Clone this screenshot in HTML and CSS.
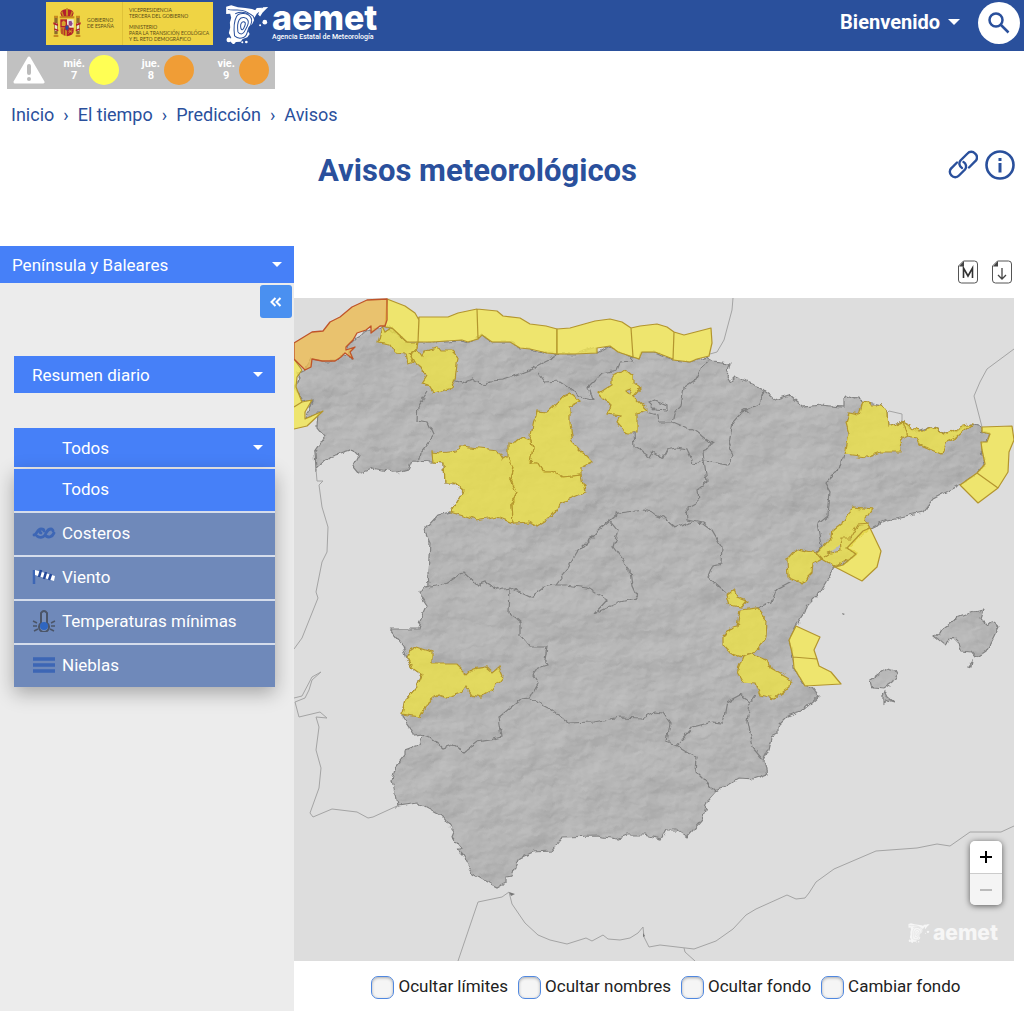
FILE: index.html
```html
<!DOCTYPE html>
<html lang="es">
<head>
<meta charset="utf-8">
<meta name="viewport" content="width=device-width, initial-scale=1">
<title>Avisos meteorológicos - Aemet</title>
<link rel="stylesheet" href="styles.css">
</head>
<body>
<svg class="defs" aria-hidden="true">
  <symbol id="peninsula" viewBox="0 0 130 116">
    <path fill="currentColor" d="M3 5 18 1l20 6 22 2 20 3 16 6-6 8-7 7 3 12-5 11-11 10-2 12 5 8-7 10-14 5-6 8-14 1-7 8-9-9 2-12-7-14 4-16-1-15 4-14-3-12-12 1z"/>
    <g fill="none" stroke="var(--logo-line)" stroke-width="3">
      <path d="M8 13c16 5 36-3 52 6s30 14 28 26"/>
      <path d="M28 92c-2-16-2-44 6-58s34-10 42 2-2 28-6 34-4 22-14 26-22 2-28-4"/>
      <path d="M38 80c-2-14-2-26 4-36s22-8 26 2-4 20-8 28-6 12-12 12-8-2-10-6z"/>
      <path d="M47 70c-2-8 0-16 4-19s10 0 9 6-4 10-6 14-5 4-7-1z"/>
      <path d="M30 26c14-6 30-4 40 2"/>
    </g>
    <path fill="currentColor" d="M94 9l16-1-5 9-11 9-7 12-5-12zM113 7l15-1-9 9-8 8-7 11-6-6 5-12z"/>
    <circle cx="118" cy="51" r="7" fill="currentColor"/><circle cx="11" cy="104" r="7" fill="currentColor"/>
    <circle cx="104" cy="60" r="3" fill="currentColor"/><circle cx="51" cy="111" r="3" fill="currentColor"/><circle cx="63" cy="110" r="4" fill="currentColor"/>
  </symbol>
</svg>

<header class="topbar">
  <div class="brands">
    <a class="gov" href="#">
      <svg class="arms" viewBox="0 0 84 88" aria-hidden="true">
        <path fill="#8d6b2c" d="M4 28h10v50H4zM70 28h10v50H70z"/>
        <path fill="#e9e2cf" d="M6 44h6v24H6zM72 44h6v24h-6z"/>
        <path fill="#b3202c" d="M1 42l14 5v6L1 48zM69 47l14-5v6l-14 5zM4 60l12 4v5L4 65zM68 64l12-4v5l-12 4z"/>
        <path fill="#b3202c" d="M22 14C26 3 36 3 42 3s16 0 20 11l-4 12H26z"/>
        <path fill="#c78a1f" d="M20 24h44v6H20zM39 0h6v22h-6zM28 8l5 15h-4l-5-11zM56 8l-5 15h4l5-11zM2 80h14v6H2zM68 80h14v6H68zM3 22h12v7H3zM69 22h12v7H69z"/>
        <path fill="#b3202c" d="M22 33h20v25H22z"/><path fill="#ece5d6" d="M42 33h20v25H42z"/>
        <path fill="#c98a22" d="M22 58h20v26q-20-3-20-16z"/><path fill="#b3202c" d="M42 58h20v10q0 13-20 16z"/>
        <path stroke="#b3202c" stroke-width="3" d="M27 60v17M34 60v21"/><path fill="#d8a32c" d="M26 40h3v-3h6v3h3v13H26z"/>
        <path fill="#8e4a91" d="M47 39l8-2 4 9-4 8-8-3z"/><path fill="none" stroke="#d8a32c" stroke-width="2" d="M46 62l12 14M58 62 46 76M46 69h12"/>
        <ellipse cx="42" cy="58" rx="6" ry="8" fill="#2c4c98" stroke="#b3202c" stroke-width="2"/>
      </svg>
      <span class="gov-name">GOBIERNO<br>DE ESPAÑA</span>
      <span class="gov-dept"><span>VICEPRESIDENCIA<br>TERCERA DEL GOBIERNO</span><span>MINISTERIO<br>PARA LA TRANSICIÓN ECOLÓGICA<br>Y EL RETO DEMOGRÁFICO</span></span>
    </a>
    <a class="aemet" href="#">
      <svg class="aemet-mark" aria-hidden="true"><use href="#peninsula"/></svg>
      <span class="aemet-text"><span class="aemet-word">aemet</span><span class="aemet-sub">Agencia Estatal de Meteorología</span></span>
    </a>
  </div>
  <div class="top-actions">
    <button class="welcome" type="button">Bienvenido <span class="caret"></span></button>
    <button class="search" type="button" aria-label="Buscar">
      <svg viewBox="0 0 24 24"><circle cx="9" cy="9" r="6.5"/><path d="M13.5 13.5 21.5 21.5"/></svg>
    </button>
  </div>
</header>

<a class="warnings" href="#">
  <svg class="warn-sign" viewBox="0 0 32 28" role="img" aria-label="Avisos"><path fill="#fff" stroke="#fff" stroke-width="3" stroke-linejoin="round" d="M16 2 30 26H2z"/><path stroke="#bbb" stroke-width="4" stroke-linecap="round" d="M16 10v7"/><circle cx="16" cy="23" r="2" fill="#bbb"/></svg>
  <span class="day"><b>mié.<br>7</b><i class="dot yellow"></i></span>
  <span class="day"><b>jue.<br>8</b><i class="dot orange"></i></span>
  <span class="day"><b>vie.<br>9</b><i class="dot orange"></i></span>
</a>

<nav class="crumbs" aria-label="Ruta">
  <a href="#">Inicio</a><span>›</span><a href="#">El tiempo</a><span>›</span><a href="#">Predicción</a><span>›</span><a href="#">Avisos</a>
</nav>

<div class="title-row">
  <h1>Avisos meteorológicos</h1>
  <div class="title-icons">
    <a href="#" aria-label="Enlace"><svg class="icon30" viewBox="0 0 30 30" fill="none" stroke="#2a509c" stroke-width="2.4" stroke-linecap="round"><path d="M9 12.500 3.500 18a5 5 0 0 0 0 7.500 5 5 0 0 0 7.500 0L17 19.500a5 5 0 0 0-1.500-7.500"/><path d="M21 17.500 27 11.500a5 5 0 0 0 0-8 5 5 0 0 0-7.500 0L12.500 10.500a5 5 0 0 0 1.500 7.500"/></svg></a>
    <a href="#" aria-label="Información"><svg class="icon30" viewBox="0 0 30 30"><circle cx="15" cy="15" r="13.500" fill="none" stroke="#2a509c" stroke-width="2.600"/><path fill="#2a509c" d="M13.500 8h3v3h-3zM13.500 13h3v9.500h-3z"/></svg></a>
  </div>
</div>

<div class="layout">
  <aside class="sidebar">
    <div class="picker region">
      <select aria-label="Zona"><option>Península y Baleares</option></select><span class="caret"></span>
    </div>
    <button class="collapse" type="button" aria-label="Ocultar panel"><svg viewBox="0 0 12 10"><path d="M5.500 1 1.500 5l4 4M10.500 1l-4 4 4 4"/></svg></button>
    <div class="filters">
      <div class="picker daily">
        <select aria-label="Periodo"><option>Resumen diario</option></select><span class="caret"></span>
      </div>
      <div class="kinds">
        <button class="kind-toggle" type="button" aria-expanded="true">Todos<span class="caret"></span></button>
        <ul class="kind-list">
          <li><button type="button" class="kind selected"><span class="kind-icon"></span>Todos</button></li>
          <li><button type="button" class="kind"><svg class="kind-icon" viewBox="0 0 24 22" fill="none" stroke="#3d66b5" stroke-width="2.800" stroke-linecap="round"><path d="M2 13c3 0 3-6 7-6 2 0 3 1 3 2M5 14c2 2 6 2 8-1s2-6 6-6c1 0 2 1 2 2M9 11q-1 0-1-1M14 14c3 2 6 1 8-3"/></svg>Costeros</button></li>
          <li><button type="button" class="kind"><svg class="kind-icon" viewBox="0 0 24 22"><path stroke="#3d66b5" stroke-width="2.500" d="M2 4v14"/><path fill="#fff" d="M3 4 23 10l-1 5-19-6z"/><path stroke="#24499b" stroke-width="2.600" d="M9 4 7 11M14 6l-2 7M19 8l-2 6"/></svg>Viento</button></li>
          <li><button type="button" class="kind"><svg class="kind-icon" viewBox="0 0 24 22"><path fill="#7890bc" stroke="#4b5568" stroke-width="2" d="M9 13V3q3-4 6 0v10a5 5 0 1 1-6 0z"/><circle cx="12" cy="16" r="4" fill="#2f66c0"/><path stroke="#4b5568" stroke-width="1.500" d="M1 11l4 2M1 16h4M2 21l4-2M23 11l-4 2M23 16h-4M22 21l-4-2"/></svg>Temperaturas mínimas</button></li>
          <li><button type="button" class="kind"><svg class="kind-icon" viewBox="0 0 24 22" stroke="#3d66b5" stroke-width="3.500"><path d="M1 5h22M1 11h22M1 17h22"/></svg>Nieblas</button></li>
        </ul>
      </div>
    </div>
  </aside>

  <main class="content">
    <div class="tools">
      <a href="#" aria-label="Mapa"><svg class="tool" viewBox="0 0 20 24"><path fill="#fff" stroke="#555" d="M5.500 1h11q3 0 3 3v16q0 3-3 3h-13q-3 0-3-3V6z"/><path fill="#444" d="M1 6.500 6 1v5.500z"/><path fill="none" stroke="#333" stroke-width="1.600" d="M5.500 18V8l4.500 8 4.500-8v10"/></svg></a>
      <a href="#" aria-label="Descargar"><svg class="tool" viewBox="0 0 20 24"><path fill="#fff" stroke="#555" d="M5.500 1h11q3 0 3 3v16q0 3-3 3h-13q-3 0-3-3V6z"/><path fill="#444" d="M1 6.500 6 1v5.500z"/><path fill="none" stroke="#444" stroke-width="1.300" d="M10 8v11M6 15l4 4 4-4"/></svg></a>
    </div>
    <div class="map">
      <svg class="map-canvas" viewBox="294 298 720 663" role="img" aria-label="Mapa de avisos">
        <defs>
          <filter id="relief" x="0" y="0" width="100%" height="100%" color-interpolation-filters="sRGB">
            <feTurbulence type="fractalNoise" baseFrequency=".02 .03" numOctaves="4" seed="8"/>
            <feDiffuseLighting surfaceScale="5" diffuseConstant="1.010" lighting-color="#fff"><feDistantLight azimuth="225" elevation="45"/></feDiffuseLighting>
            <feComponentTransfer result="hills"><feFuncR type="linear" slope=".17" intercept=".59"/><feFuncG type="linear" slope=".17" intercept=".59"/><feFuncB type="linear" slope=".17" intercept=".59"/></feComponentTransfer>
            <feComposite in="hills" in2="SourceAlpha" operator="in"/>
          </filter>
          <filter id="rough" x="-2%" y="-2%" width="104%" height="104%" color-interpolation-filters="sRGB">
            <feTurbulence type="fractalNoise" baseFrequency=".13" numOctaves="2" seed="3" result="n"/>
            <feDisplacementMap in="SourceGraphic" in2="n" scale="6" xChannelSelector="R" yChannelSelector="G"/>
          </filter>
          <path id="land" d="M305 370 312 359 322 361 335 361 343 355 352 358 347 347 357 337 370 330 385 326 390 330 407 342 432 342 462 340 468 342 482 335 492 342 510 342 520 348 530 349 547 353 575 354 597 347 597 353 610 346 618 352 633 357 639 359 642 352 655 352 673 360 690 362 708 356 712 361 730 363 727 377 730 382 735 377 747 382 760 387 770 394 777 400 790 396 803 407 820 405 843 407 843 398 846 395 863 401 881 405 887 413 888 427 903 422 917 432 932 427 948 434 970 424 981 427 982 432 990 434 987 442 981 442 982 450 985 464 977 473 960 485 933 499 923 512 887 520 870 528 847 548 856 554 843 565 835 567 820 592 808 604 805 613 796 626 789 640 793 657 794 668 805 686 813 688 819 696 802 711 787 716 778 725 778 734 772 737 769 750 764 760 767 774 754 779 739 778 724 787 716 792 707 802 702 820 687 837 677 830 666 830 661 839 645 835 627 835 617 839 597 836 563 837 552 851 533 852 520 858 512 876 506 877 506 882 497 887 485 881 473 874 462 854 458 850 463 850 452 837 454 832 442 816 418 803 397 806 395 793 392 780 396 766 405 755 405 750 418 745 422 734 415 735 402 716 405 700 417 687 422 675 412 668 407 658 403 645 390 629 418 629 421 618 427 605 419 593 423 587 429 585 428 573 430 543 424 530 438 515 450 512 463 491 453 483 445 483 444 463 433 462 412 461 408 470 397 473 372 468 358 473 353 467 359 455 353 449 330 456 316 469 315 452 325 437 317 427 318 413 305 419 312 400 303 402 295 387 300 378 297 372ZM934 636 957 617 973 611 983 609 980 618 987 625 992 621 999 626 992 640 986 651 976 658 971 652 962 651 958 642 953 637 945 645ZM871 680 878 675 887 669 895 671 897 675 892 682 883 688 873 687ZM885 691 888 697 894 702 887 700 883 703 883 696ZM972 662 971 668 968 667Z"/>
        </defs>
        <rect x="294" y="298" width="720" height="663" fill="#ddd"/>
        <g fill="none" stroke="#a4a4a4" stroke-width="1">
          <path d="M316 469 317 481 323 481 319 485 322 507 328 527 327 552 322 562 316 592 318 598 302 638 294 649M294 698 302 696 312 677 321 672 312 680 309 690 305 698 295 702 299 717 320 712 327 718 316 717 319 727 316 750 321 768 319 788 310 813 313 817 332 809 357 812 368 818 373 817 397 806"/>
          <path d="M733 298 732 310 724 340 717 352 710 354M1014 349 987 369 980 382 974 396 982 427M887 413 889 411 902 414 902 422"/>
          <path d="M458 961 478 902 502 897 509 892 512 904 525 923 538 935 550 940 567 944 586 938 592 941 603 935 608 939 620 940 630 938 638 933 643 927 644 937 649 947 660 945 694 949 716 941 733 929 746 915 756 909 787 895 796 899 805 898 809 893 816 882 834 869 876 851 917 848 937 844 950 846 970 832 1001 832 1014 826M684 948 685 952 695 961"/>
        </g>
        <path fill="#777" d="M509 892l6 2-4 2zM643 933l2 3-2 1zM842 613l3 1-2 1z"/>
        <g filter="url(#rough)">
          <use href="#land" fill="#b5b5b5" filter="url(#relief)"/>
          <use href="#land" fill="none" stroke="#828282" stroke-width="1.200"/>
          <g fill="none" stroke="#7f7f7f" stroke-width="1.200">
            <path d="M428 392 418 407 417 420 428 422 434 435 425 447 420 453 418 462M453 380 463 383 472 379 485 387 490 381 503 380 530 370 545 362 555 357 556 352M538 372 545 382 560 381 573 390 580 397 593 400 590 390 587 388 602 373 617 370 620 363 632 362 633 357M648 403 655 400 667 405 667 411 655 410Z"/>
            <path d="M647 412 657 415 658 422 673 422 697 432 713 445 703 450 704 461 693 463 687 450 677 448 667 450 663 458 653 452 650 457 635 447 634 433M673 422 675 413 680 407 683 388 695 380 702 367 710 361M765 388 760 403 743 412 733 423 729 443 734 455 728 465 710 462 704 461 707 482 697 490 698 502 687 508 688 520 703 523 712 530 722 547 721 563 713 565 708 577 727 593"/>
            <path d="M692 522 675 528 663 517 645 510 618 513 610 520 598 530 592 537 577 552 567 570 555 585 543 587 530 597 511 588 497 590 485 582 477 585 463 572 443 585 429 587M610 520 618 530 613 547 630 570 632 587 637 598 620 602 595 613 607 600 588 588 565 585 555 585M510 588 509 613 520 622 520 635 530 647 547 647 545 660 548 665 538 668 533 675 538 683 530 697 522 698 498 718 501 737 490 740 478 742 465 752 452 745 443 748 430 737 422 734"/>
            <path d="M530 699 552 710 568 723 593 722 620 717 642 718 655 712 663 713 670 723 667 742 677 746 697 758 696 772 716 792M677 746 693 727 712 722 723 723 727 702 740 695 750 702 747 722 752 747 763 760M750 702 755 695M757 608 771 602 775 590 790 582M844 455 840 468 825 483 830 492 828 515 818 523 822 545 817 553M740 412l5-3 3 2z"/>
          </g>
          <g fill="#f0e442" fill-opacity=".75" stroke="#b3952e" stroke-width="1.200">
            <path d="M382 326 385 332 391 328 407 342 418 342 417 349 410 353 415 362 408 364 406 354 395 353 390 345 378 343ZM409 353 417 349 422 356 425 350 437 347 440 351 452 351 458 357 455 380 450 389 433 393 428 385 422 383 427 375 420 368 413 362Z"/>
            <path d="M432 452 440 453 457 451 460 446 480 448 497 450 503 460 508 457 513 467 510 478 517 493 512 503 513 523 497 517 477 521 470 518 450 512 463 491 453 483 445 483 444 463 433 462Z"/>
            <path d="M530 440 536 411 547 412 557 403 563 396 570 393 580 402 570 407 570 423 573 443 583 453 592 462 582 467 582 475 563 477 550 472 543 472 537 463 530 463 533 448Z"/>
            <path d="M508 442 515 443 523 437 530 440 533 448 530 463 537 463 543 472 550 472 563 477 582 475 586 492 560 503 558 509 548 520 538 526 530 522 513 523 512 503 517 493 510 478 513 467 508 457Z"/>
            <path fill-rule="evenodd" d="M612 375 627 370 633 375 633 382 641 388 633 397 647 410 637 413 637 433 627 433 617 422 620 416 607 414 610 405 598 393 612 384ZM626 391 632 389 630 395Z"/>
            <path d="M863 401 869 402 870 405 881 405 887 413 888 427 903 422 908 436 900 440 901 452 880 452 867 457 845 454 849 434 846 423 849 413 859 415ZM903 422 913 427 920 432 932 427 947 434 962 426 972 424 957 437 945 443 941 454 920 445 917 438 908 436Z"/>
            <path d="M833 529 845 520 853 507 872 509 865 520 870 528 847 548 856 554 835 567 823 560 817 553 832 537ZM824 557 830 553 842 551 841 538 850 538 858 524 869 523M787 559 796 549 817 553 822 558 813 563 812 573 802 583 788 577Z"/>
            <path d="M727 595 734 590 737 597 747 601 742 607 730 605ZM740 610 757 608 767 620 766 637 758 647 752 654 742 657 730 653 723 645 723 637 732 628 737 627ZM752 654 767 660 770 668 791 680 790 687 775 698 770 697 760 695 755 683 743 682 737 672 743 657Z"/>
            <path d="M417 647 432 652 432 664 456 664 467 675 473 669 487 667 493 672 499 667 503 676 492 690 481 697 472 695 466 687 463 692 447 697 438 694 428 702 420 717 402 714 405 700 417 687 422 675 412 668 407 658 410 651Z"/>
          </g>
        </g>
        <g fill="#f2e752" fill-opacity=".8" stroke="#b3952e" stroke-width="1.200" stroke-linejoin="round">
          <path d="M387 299 405 306 415 313 419 320 418 342 407 342 392 328 385 327ZM419 317 448 317 458 313 477 309 478 339 468 342 462 340 432 342 418 342ZM477 309 497 311 503 316 520 318 530 324 546 326 557 329 557 354 547 353 530 349 520 348 510 342 492 342 482 335 478 339Z"/>
          <path d="M557 329 570 328 595 321 610 319 622 322 631 328 633 357 618 352 610 346 597 348 597 353 575 354 557 354ZM631 328 640 326 657 324 667 327 674 332 673 359 655 352 642 352 639 359 633 357ZM674 332 684 335 711 328 712 343 709 356 697 359 690 362 673 360Z"/>
          <path d="M294 359 302 370 297 377 296 387 302 402 312 400 305 412 305 419 323 411 307 426 294 429M294 407 302 402"/>
          <path d="M982 427 1012 426 1014 440 1009 452 1008 472 998 488 977 473 985 464 982 450 981 442 987 442 990 434 982 432ZM977 473 998 488 978 503 960 485ZM870 528 881 551 877 567 862 581 835 567 843 565 856 554 847 548 863 531ZM796 626 820 637 814 650 817 659 793 657 789 640ZM817 659 819 666 831 672 841 684 805 686 794 668 793 657Z"/>
        </g>
        <path fill="#ecbb52" fill-opacity=".8" stroke="#bf5429" stroke-width="1.300" stroke-linejoin="round" d="M294 343 312 332 323 331 330 322 340 317 352 307 367 300 387 299 387 320 385 326 380 326 371 333 371 326 366 330 357 333 353 340 346 347 346 350 355 347 350 352 353 359 345 353 341 357 335 361 322 361 312 359 311 367 305 370 294 359Z"/>
      </svg>
      <div class="zoom">
        <button type="button" aria-label="Acercar"><svg viewBox="0 0 12 12"><path d="M6 0v12M0 6h12"/></svg></button>
        <button type="button" aria-label="Alejar" disabled><svg viewBox="0 0 12 12"><path d="M0 6h12"/></svg></button>
      </div>
      <div class="watermark"><svg aria-hidden="true"><use href="#peninsula"/></svg><span>aemet</span></div>
    </div>
    <form class="options">
      <label><input type="checkbox">Ocultar límites</label>
      <label><input type="checkbox">Ocultar nombres</label>
      <label><input type="checkbox">Ocultar fondo</label>
      <label><input type="checkbox">Cambiar fondo</label>
    </form>
  </main>
</div>
</body>
</html>
```

FILE: styles.css
```css
* { box-sizing: border-box; }
body { margin: 0; background: #fff; color: #222; font: 17px/24px Roboto, "Liberation Sans", sans-serif; }
a { color: #2a509c; text-decoration: none; }
button, select { font: inherit; color: inherit; border: 0; border-radius: 0; }
h1 { margin: 0; }
.defs { position: absolute; width: 0; height: 0; }
.caret { width: 0; height: 0; border: 5px solid transparent; border-top-color: #fff; border-bottom: 0; }

.topbar { display: flex; justify-content: space-between; background: #2a509c; color: #fff; height: 51px; padding: 2px 4px 0 46px; }
.brands { display: flex; gap: 12px; align-items: flex-start; }
.gov { display: flex; align-items: stretch; width: 167px; height: 43px; background: #efd444; color: #5b4c16; font: 5px/6px Lato, sans-serif; }
.arms { width: 28px; height: 30px; margin: 6px 6px 0 7px; }
.gov-name { width: 36px; padding-top: 15px; border-right: 1px solid #dfc238; }
.gov-dept { display: flex; flex-direction: column; gap: 5px; padding: 5px 0 0 6px; white-space: nowrap; }
.aemet { display: flex; gap: 3px; color: #fff; --logo-line: #2a509c; padding-top: 3px; }
.aemet-mark { width: 44px; height: 39px; }
.aemet-text { display: flex; flex-direction: column; }
.aemet-word { font: 800 34px/26px Inter, sans-serif; }
.aemet-sub { font: 500 7px/10px Roboto, sans-serif; padding-top: 1px; }
.top-actions { display: flex; gap: 18px; }
.welcome { display: flex; align-items: center; gap: 8px; height: 40px; padding: 0; background: none; font-size: 20px; font-weight: 700; }
.welcome .caret { border-width: 6px; border-bottom: 0; }
.search { width: 42px; height: 42px; padding: 0; border-radius: 50%; background: #fff; display: grid; place-items: center; }
.search svg { width: 24px; height: 24px; fill: none; stroke: #2a509c; stroke-width: 2.500; }

.warnings { display: flex; width: max-content; margin-left: 7px; height: 38px; padding: 0 6px; background: #c1c1c1; color: #fff; align-items: center; }
.warn-sign { width: 32px; height: 28px; margin-right: 6px; }
.day { display: flex; align-items: center; justify-content: flex-end; width: 75px; gap: 4px; text-align: center; font-size: 11px; line-height: 12px; }
.day:first-of-type { width: 68px; }
.dot { width: 30px; height: 30px; border-radius: 50%; }
.yellow { background: #ffff54; }
.orange { background: #f09d36; }

.crumbs { display: flex; gap: 9px; padding: 14px 11px 0; color: #2a509c; font-size: 18px; }
.title-row { display: grid; grid-template-columns: 1fr auto 1fr; align-items: center; padding: 20px 9px 0 0; }
.title-row h1 { grid-column: 2; color: #2a509c; font-size: 31px; line-height: 48px; font-weight: 700; margin-right: 60px; }
.title-icons { display: flex; gap: 7px; justify-content: flex-end; padding-bottom: 12px; }
.icon30 { display: block; width: 30px; height: 30px; }

.layout { display: grid; grid-template-columns: 294px 1fr; margin-top: 51px; }
.sidebar { background: #ececec; display: flex; flex-direction: column; }
.picker { display: grid; align-items: center; background: #4680f8; color: #fff; }
.picker > * { grid-area: 1 / 1; }
.picker .caret { justify-self: end; margin-right: 12px; pointer-events: none; }
.picker select { appearance: none; width: 100%; height: 37px; padding: 0 12px; background: transparent; }
.picker.daily select { padding-left: 18px; }
.collapse { align-self: flex-end; width: 32px; height: 33px; margin: 2px 2px 0 0; padding: 0; border-radius: 3px; background: #4a90f0; display: grid; place-items: center; }
.collapse svg { width: 12px; height: 10px; fill: none; stroke: #fff; stroke-width: 2; }
.filters { padding: 38px 19px 0 14px; display: grid; gap: 35px; color: #fff; }
.kinds { display: grid; gap: 2px; }
.kind-toggle { display: flex; align-items: center; justify-content: space-between; width: 100%; height: 39px; padding: 0 12px 0 48px; background: #4680f8; }
.kind-list { list-style: none; margin: 0; padding: 0; display: grid; gap: 2px; background: #d5ddec; box-shadow: 0 6px 18px rgba(0, 0, 0, .3); }
.kind { display: flex; align-items: center; gap: 6px; width: 100%; height: 42px; padding: 0 18px 2px; background: #6f89ba; text-align: left; }
.kind.selected { background: #4680f8; }
.kind-icon { width: 24px; height: 22px; }

.content { padding-right: 10px; }
.tools { display: flex; justify-content: flex-end; gap: 14px; height: 52px; padding: 14px 2px 0; }
.tool { display: block; width: 20px; height: 24px; }
.map { position: relative; }
.map-canvas { display: block; width: 100%; height: auto; }
.zoom { position: absolute; right: 12px; bottom: 56px; width: 32px; border-radius: 5px; overflow: hidden; box-shadow: 0 1px 6px rgba(0, 0, 0, .6); }
.zoom button { display: grid; place-items: center; width: 32px; height: 32px; padding: 0; background: #fff; color: #000; }
.zoom button:disabled { background: #f4f4f4; color: #bbb; border-top: 1px solid #ccc; }
.zoom svg { width: 12px; height: 12px; fill: none; stroke: currentColor; stroke-width: 2; }
.watermark { position: absolute; right: 16px; bottom: 18px; display: flex; align-items: center; gap: 3px; color: #f6f6f6; --logo-line: #ddd; font: 800 21px/20px Inter, sans-serif; }
.watermark svg { width: 22px; height: 20px; }
.options { display: flex; justify-content: center; flex-wrap: wrap; gap: 10px; padding: 12px 0 13px 24px; }
.options label { display: flex; align-items: center; gap: 4px; }
.options input { appearance: none; width: 23px; height: 23px; margin: 3px 0 -1px; border: 1px solid #5088e0; border-radius: 7px; background: #f5f5f5; box-shadow: inset 0 1px 3px rgba(0, 0, 0, .3); }
```
